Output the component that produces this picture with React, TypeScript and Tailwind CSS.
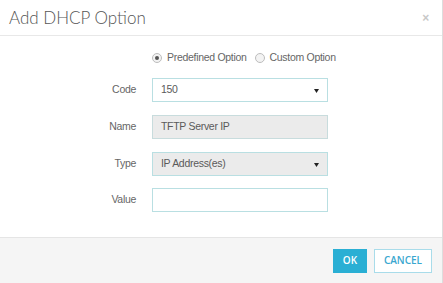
import React from 'react'

function Radio({ checked, label }: { checked?: boolean; label: string }) {
  return (
    <label className="flex items-center gap-[5px]">
      <span className="flex h-[10px] w-[10px] items-center justify-center rounded-full border border-[#bdbdbd] bg-[#f3f3f3]">
        {checked && <span className="h-[4px] w-[4px] rounded-full bg-[#555]" />}
      </span>
      <span>{label}</span>
    </label>
  )
}

function Caret() {
  return (
    <svg width="5" height="4" viewBox="0 0 5 4" className="absolute right-[8px] top-[10px]">
      <path d="M0 0h5L2.5 4z" fill="#222" />
    </svg>
  )
}

function Row({ label, children, className = '' }: { label: string; children: React.ReactNode; className?: string }) {
  return (
    <div className={`flex items-center ${className}`}>
      <div className="w-[136px] text-right text-[#666]">{label}</div>
      <div className="ml-4 w-[176px]">{children}</div>
    </div>
  )
}

export default function App() {
  return (
    <div
      className="flex h-[283px] w-[443px] flex-col border-r border-[#ddd] bg-white text-[10.5px] tracking-[-0.3px] text-[#5a5a5a]"
      style={{ fontFamily: '"Liberation Sans Narrow", "Liberation Sans", Arial, sans-serif' }}
    >
      <div className="flex h-[36px] shrink-0 items-center justify-between border-b border-[#e8e8e8] pl-[9px] pr-[13px]">
        <h1 className="font-['Lato',sans-serif] text-[17px] font-light leading-none tracking-normal text-[#555]">Add DHCP Option</h1>
        <span className="text-[12px] font-bold leading-none text-[#c8c8c8]">×</span>
      </div>

      <div className="flex-1 pt-[14px]">
        <div className="ml-[152px] flex h-[16px] items-center gap-[8px] text-[#666]">
          <Radio checked label="Predefined Option" />
          <Radio label="Custom Option" />
        </div>

        <Row label="Code" className="mt-[12px]">
          <div className="relative flex h-[24px] items-center border border-[#b9dfe2] bg-white pl-[8px]">
            150
            <Caret />
          </div>
        </Row>
        <Row label="Name" className="mt-[13px]">
          <div className="flex h-[24px] items-center border border-[#c8dcdd] bg-[#ebebeb] pl-[8px]">TFTP Server IP</div>
        </Row>
        <Row label="Type" className="mt-[13px]">
          <div className="relative flex h-[24px] items-center border border-[#b9dfe2] bg-[#ebebeb] pl-[8px]">
            IP Address(es)
            <Caret />
          </div>
        </Row>
        <Row label="Value" className="mt-[12px]">
          <div className="h-[24px] border border-[#b9dfe2] bg-white" />
        </Row>
      </div>

      <div className="flex h-[46px] shrink-0 items-center justify-end gap-[7px] border-t border-[#e5e5e5] bg-[#f5f5f5] pr-[10px] font-['Open_Sans',sans-serif] text-[10px] font-semibold tracking-normal">
        <button className="h-[24px] w-[34px] bg-[#2aafd4] text-white">OK</button>
        <button className="h-[24px] w-[58px] border border-[#a9dcea] bg-white text-[#3aa7cf]">CANCEL</button>
      </div>
    </div>
  )
}
